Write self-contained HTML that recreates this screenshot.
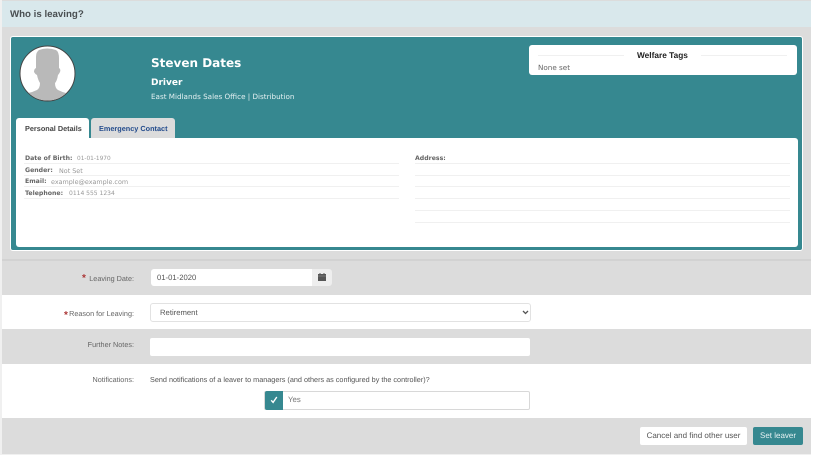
<!DOCTYPE html>
<html>
<head>
<meta charset="utf-8">
<style>
html,body{margin:0;padding:0;width:814px;height:455px;overflow:hidden;background:#fff;}
body{position:relative;font-family:"Liberation Sans",sans-serif;text-rendering:geometricPrecision;filter:blur(.3px);}
div,span,select{position:absolute;box-sizing:border-box;white-space:nowrap;}
.m{font-family:"DejaVu Sans",sans-serif;}
.line{height:1px;background:#f0f0f0;}
.lb{font-family:"DejaVu Sans",sans-serif;font-size:6.2px;font-weight:bold;color:#666;line-height:10px;}
.vl{font-family:"DejaVu Sans",sans-serif;font-size:6.4px;color:#999;line-height:10px;}
.fl{font-size:7.25px;color:#666;line-height:10px;text-align:right;}
</style>
</head>
<body>
<div style="left:0;top:0;width:811px;height:455px;background:#f0f0f0"></div>
<div style="left:2px;top:0;width:809px;height:454px;background:#dcdcdc"></div>
<div style="left:2px;top:1px;width:809px;height:26px;background:#d9e8ec"></div>
<div style="left:10px;top:9px;font-size:9.7px;font-weight:bold;color:#4a4f52;line-height:12px">Who is leaving?</div>

<div style="left:10px;top:36px;width:793px;height:215px;background:#fff;border-radius:3px"></div>
<div style="left:11px;top:37px;width:791px;height:213px;background:#368890;border-radius:2px"></div>

<svg style="position:absolute;left:19px;top:45px" width="57" height="57" viewBox="0 0 57 57">
<defs><clipPath id="c"><circle cx="28.5" cy="28.5" r="27"/></clipPath></defs>
<circle cx="28.5" cy="28.5" r="27.5" fill="#fff" stroke="#444" stroke-width="1"/>
<path clip-path="url(#c)" fill="#b9b9b9" d="M20 5Q28 2 37 5Q40 7 40 13L40 23Q42 24 41 27Q40 29 39 30Q38 36 36 38Q36 43 39 45Q43 47 47 48L47 57L9 57L9 48Q14 47 18 45Q21 43 21 38Q19 35 18 30Q16 29 15 27Q15 24 17 23L17 12Q17 7 20 5Z"/>
</svg>

<div class="m" style="left:151px;top:55px;font-size:12px;font-weight:bold;color:#fff;line-height:16px;">Steven Dates</div>
<div class="m" style="left:151px;top:77px;font-size:9px;font-weight:bold;color:#fff;line-height:13px;">Driver</div>
<div class="m" style="left:151px;top:91px;font-size:7.2px;color:#e3f0f1;line-height:11px;">East Midlands Sales Office | Distribution</div>

<div style="left:529px;top:45px;width:268px;height:30px;background:#fff;border-radius:3px"></div>
<div class="line" style="left:538px;top:55px;width:86px"></div>
<div class="line" style="left:701px;top:55px;width:86px"></div>
<div style="left:637px;top:50px;font-size:8.3px;font-weight:bold;color:#222;line-height:10px">Welfare Tags</div>
<div class="m" style="left:538px;top:63px;font-size:7.2px;color:#666;line-height:10px">None set</div>

<div style="left:16px;top:118px;width:73px;height:21px;background:#fff;border-radius:3px 3px 0 0"></div>
<div style="left:91px;top:118px;width:84px;height:20px;background:#dcdcdc;border-radius:3px 3px 0 0"></div>
<div style="left:25px;top:123.5px;font-size:7.3px;font-weight:bold;color:#444;line-height:10px;">Personal Details</div>
<div style="left:99px;top:123.5px;font-size:7.3px;font-weight:bold;color:#234b8c;line-height:10px;">Emergency Contact</div>

<div style="left:16px;top:138px;width:782px;height:109px;background:#fff;border-radius:0 3px 3px 3px"></div>

<div class="lb" style="left:25px;top:153.5px">Date of Birth:</div><div class="vl" style="left:77px;top:153.5px;font-size:5.8px">01-01-1970</div>
<div class="line" style="left:24px;top:163px;width:375px"></div>
<div class="lb" style="left:25px;top:165.5px">Gender:</div><div class="vl" style="left:59px;top:165.5px">Not Set</div>
<div class="line" style="left:24px;top:175px;width:375px"></div>
<div class="lb" style="left:25px;top:177px">Email:</div><div class="vl" style="left:51px;top:177px">example@example.com</div>
<div class="line" style="left:24px;top:186px;width:375px"></div>
<div class="lb" style="left:25px;top:188.5px">Telephone:</div><div class="vl" style="left:69px;top:188.5px;font-size:6px">0114 555 1234</div>
<div class="line" style="left:24px;top:198px;width:375px"></div>

<div class="lb" style="left:415px;top:153.5px">Address:</div>
<div class="line" style="left:415px;top:163px;width:375px"></div>
<div class="line" style="left:415px;top:175px;width:375px"></div>
<div class="line" style="left:415px;top:186px;width:375px"></div>
<div class="line" style="left:415px;top:198px;width:375px"></div>
<div class="line" style="left:415px;top:210px;width:375px"></div>
<div class="line" style="left:415px;top:222px;width:375px"></div>

<div style="left:2px;top:259px;width:809px;height:2px;background:#d2d2d2"></div>
<div style="left:2px;top:295px;width:809px;height:34px;background:#fff"></div>
<div style="left:2px;top:364px;width:809px;height:54px;background:#fff"></div>

<div style="left:82px;top:273px;font-size:10px;font-weight:bold;color:#a33;line-height:11px">*</div>
<div class="fl" style="left:34px;top:274px;width:100px">Leaving Date:</div>
<div style="left:151px;top:269px;width:161px;height:17px;background:#fff;border-radius:3px 0 0 3px"></div>
<div style="left:157px;top:272px;font-size:7.7px;color:#555;line-height:11px">01-01-2020</div>
<div style="left:312px;top:269px;width:20px;height:17px;background:#eeeeee;border-radius:0 3px 3px 0"></div>
<svg style="position:absolute;left:318px;top:273px" width="8" height="8" viewBox="0 0 8 8"><path fill="#555" d="M0 1H1.5V0H2.5V1H5.5V0H6.5V1H8V8H0Z"/><path stroke="#999" stroke-width=".5" d="M0 3H8"/></svg>

<div style="left:64px;top:310px;font-size:10px;font-weight:bold;color:#a33;line-height:11px">*</div>
<div class="fl" style="left:34px;top:309px;width:100px">Reason for Leaving:</div>
<div style="left:150px;top:303px;width:381px;height:19px;background:#fff;border:1px solid #e2e2e2;border-radius:3px"></div>
<div style="left:160px;top:307px;font-size:7.7px;color:#555;line-height:11px">Retirement</div>
<svg style="position:absolute;left:522px;top:310px" width="7" height="5" viewBox="0 0 7 5"><path d="M1 1L3.5 3.5L6 1" fill="none" stroke="#555" stroke-width="1.3"/></svg>

<div class="fl" style="left:34px;top:340px;width:100px">Further Notes:</div>
<div style="left:150px;top:338px;width:380px;height:18px;background:#fff;border-radius:2px"></div>

<div class="fl" style="left:34px;top:375px;width:100px">Notifications:</div>
<div style="left:150px;top:375px;font-size:7.25px;color:#555;line-height:10px">Send notifications of a leaver to managers (and others as configured by the controller)?</div>
<div style="left:264px;top:391px;width:266px;height:19px;background:#fff;border:1px solid #d8d8d8;border-radius:2px"></div>
<div style="left:265px;top:391px;width:18px;height:19px;background:#368890;border-radius:2px 0 0 2px"></div>
<svg style="position:absolute;left:270px;top:396px" width="8" height="8" viewBox="0 0 8 8"><path d="M1.2 4.3L3.1 6.4L6.8 1" fill="none" stroke="#fff" stroke-width="1.4"/></svg>
<div style="left:288px;top:395px;font-size:7.8px;color:#777;line-height:10px">Yes</div>

<div style="left:640px;top:427px;width:107px;height:18px;background:#fff;border-radius:2px"></div>
<div style="left:640px;top:431px;width:107px;text-align:center;font-size:8px;color:#555;line-height:10px">Cancel and find other user</div>
<div style="left:753px;top:427px;width:50px;height:18px;background:#368890;border-radius:2px"></div>
<div style="left:753px;top:431px;width:50px;text-align:center;font-size:8px;color:#e6f2f3;line-height:10px">Set leaver</div>
</body>
</html>
